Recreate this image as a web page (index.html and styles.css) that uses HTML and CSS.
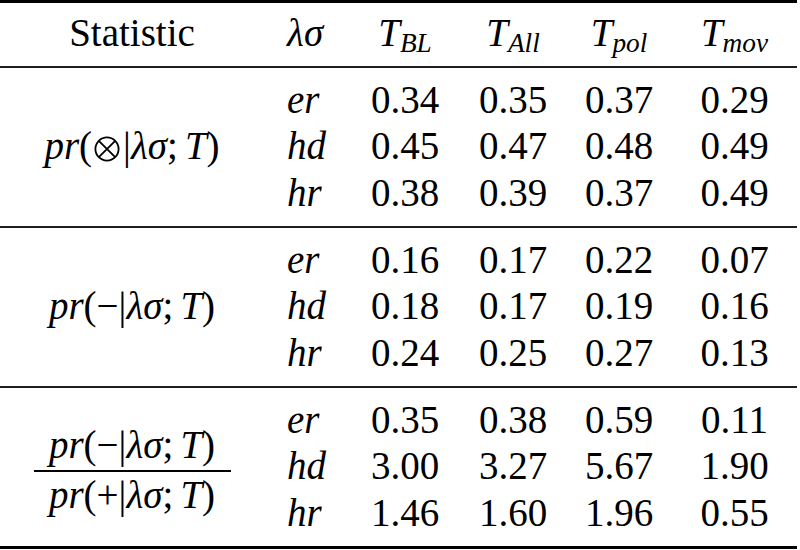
FILE: index.html
```html
<!DOCTYPE html>
<html lang="en">
<head>
<meta charset="utf-8">
<title>Table</title>
<link rel="stylesheet" href="styles.css">
</head>
<body>
<div class="tbl">
  <div class="rule thick"></div>
  <div class="grid head">
    <div class="c">Statistic</div>
    <div class="l"><i>λσ</i></div>
    <div class="c"><i>T</i><sub>BL</sub></div>
    <div class="c"><i>T</i><sub>All</sub></div>
    <div class="c"><i>T</i><sub>pol</sub></div>
    <div class="c"><i>T</i><sub>mov</sub></div>
  </div>
  <div class="rule"></div>
  <div class="grid group">
    <div class="stat"><i>pr</i>(<svg class="otimes" viewBox="0 0 26 26" width="26" height="26" aria-hidden="true"><circle cx="13" cy="13" r="11.6" fill="none" stroke="#000" stroke-width="1.8"/><path d="M4.8 4.8 L21.2 21.2 M21.2 4.8 L4.8 21.2" stroke="#000" stroke-width="1.8"/></svg>|<i>λσ</i>;<span class="sp"></span><i>T</i>)</div>
    <div class="l"><i>er</i></div><div class="c">0.34</div><div class="c">0.35</div><div class="c">0.37</div><div class="c">0.29</div>
    <div class="l"><i>hd</i></div><div class="c">0.45</div><div class="c">0.47</div><div class="c">0.48</div><div class="c">0.49</div>
    <div class="l"><i>hr</i></div><div class="c">0.38</div><div class="c">0.39</div><div class="c">0.37</div><div class="c">0.49</div>
  </div>
  <div class="rule"></div>
  <div class="grid group">
    <div class="stat"><i>pr</i>(−|<i>λσ</i>;<span class="sp"></span><i>T</i>)</div>
    <div class="l"><i>er</i></div><div class="c">0.16</div><div class="c">0.17</div><div class="c">0.22</div><div class="c">0.07</div>
    <div class="l"><i>hd</i></div><div class="c">0.18</div><div class="c">0.17</div><div class="c">0.19</div><div class="c">0.16</div>
    <div class="l"><i>hr</i></div><div class="c">0.24</div><div class="c">0.25</div><div class="c">0.27</div><div class="c">0.13</div>
  </div>
  <div class="rule"></div>
  <div class="grid group">
    <div class="stat">
      <div class="frac">
        <div class="num"><i>pr</i>(−|<i>λσ</i>;<span class="sp"></span><i>T</i>)</div>
        <div class="bar"></div>
        <div class="den"><i>pr</i>(+|<i>λσ</i>;<span class="sp"></span><i>T</i>)</div>
      </div>
    </div>
    <div class="l"><i>er</i></div><div class="c">0.35</div><div class="c">0.38</div><div class="c">0.59</div><div class="c">0.11</div>
    <div class="l"><i>hd</i></div><div class="c">3.00</div><div class="c">3.27</div><div class="c">5.67</div><div class="c">1.90</div>
    <div class="l"><i>hr</i></div><div class="c">1.46</div><div class="c">1.60</div><div class="c">1.96</div><div class="c">0.55</div>
  </div>
  <div class="rule thick"></div>
</div>
</body>
</html>
```

FILE: styles.css
```css
body {
  margin: 0;
  font-family: 'Liberation Serif', serif;
  background: #ffffff;
  color: #000000;
}
.tbl {
  width: 797px;
  font-size: 39px;
}
.rule {
  height: 2px;
  background: #1e1e1e;
}
.rule.thick {
  height: 3px;
  background: #000000;
}
.grid {
  display: grid;
  grid-template-columns: 264px 86px 110px 106px 106px 125px;
  grid-auto-rows: 46.5px;
  line-height: 46.5px;
}
.head {
  padding: 6.6px 0 10px;
}
.group {
  padding: 8.6px 0 10px;
}
.c {
  text-align: center;
}
.l {
  text-align: left;
  padding-left: 23px;
}
sub {
  font-size: 0.7em;
  font-style: italic;
  vertical-align: -0.22em;
  line-height: 0;
}
.stat {
  grid-row: 1 / span 3;
  align-self: center;
  text-align: center;
}
.otimes {
  vertical-align: -3px;
  margin: 0 3px 0 2px;
}
.sp {
  display: inline-block;
  width: 7px;
}
.frac {
  display: flex;
  flex-direction: column;
  width: 197px;
  margin: 0 auto;
  padding-top: 6px;
}
.num, .den {
  line-height: 44px;
  text-align: center;
}
.bar {
  height: 2px;
  background: #000000;
  margin: 3px 0 1px;
}
```
